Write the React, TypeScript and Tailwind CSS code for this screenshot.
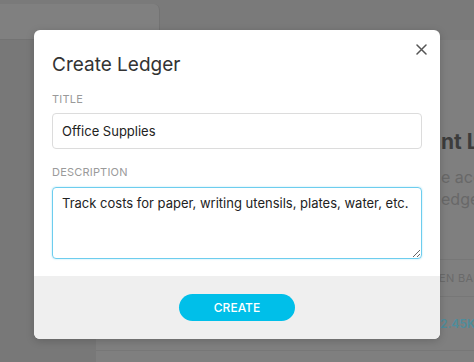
import React from "react";

export default function App() {
  return (
    <div className="relative w-[474px] h-[362px] overflow-hidden bg-[#7f7f7f] font-['Inter',sans-serif]">
      {/* dimmed page behind */}
      <div className="flex flex-col h-full">
        <header className="h-[40px] shrink-0 bg-[#7a7a7a] pt-[4px]">
          <div className="w-[160px] h-[36px] bg-[#808080] border-r border-b border-[#737373] rounded-tr-[6px]" />
        </header>
        <div className="flex flex-1">
          <aside className="w-[96px] shrink-0 bg-[#787878]" />
          <main className="flex-1 flex flex-col min-w-0">
            <div className="pl-[345px] pt-[88px] whitespace-nowrap">
              <div className="text-[21px] leading-[28px] font-bold text-[#3c3c3c]">nt Ledgers</div>
              <div className="mt-[10px] text-[16px] leading-[22px] text-[#686868]">
                <div>e accounts for</div>
                <div>edgers</div>
              </div>
            </div>
            <div className="mt-[49px] border-t border-[#777777]">
              <div className="h-[37px] border-b border-[#777777] flex items-center pl-[343px] whitespace-nowrap text-[11px] tracking-[0.3px] text-[#6a6a6a]">
                EN BALANCE
              </div>
              <div className="h-[54px] border-b border-[#777777] flex items-center pl-[344px] whitespace-nowrap text-[12px] font-semibold text-[#4e8d9c]">
                2.45K
              </div>
            </div>
          </main>
        </div>
      </div>

      {/* modal */}
      <div className="absolute left-[34px] top-[30px] w-[406px] h-[309px] rounded-[6px] bg-white overflow-hidden shadow-[0_2px_8px_rgba(0,0,0,0.18)] flex flex-col">
        <div className="relative flex-1 px-[18px] pt-[21px]">
          <button className="absolute right-[13px] top-[14px] w-[11px] h-[11px] flex items-center justify-center text-[#555]">
            <svg width="11" height="11" viewBox="0 0 11 11" fill="none" stroke="currentColor" strokeWidth="1.5" strokeLinecap="round">
              <path d="M1 1L10 10M10 1L1 10" />
            </svg>
          </button>
          <h2 className="text-[19px] leading-[28px] text-[#333333]">Create Ledger</h2>
          <label className="block mt-[12px] text-[11px] leading-[16px] tracking-[0.2px] text-[#9a9a9a]">TITLE</label>
          <input
            readOnly
            value="Office Supplies"
            className="block mt-[6px] w-full h-[36px] px-[9px] border border-[#dcdcdc] rounded-[4px] text-[13px] text-[#222] outline-none"
          />
          <label className="block mt-[15px] text-[11px] leading-[16px] tracking-[0.2px] text-[#9a9a9a]">DESCRIPTION</label>
          <textarea
            readOnly
            defaultValue="Track costs for paper, writing utensils, plates, water, etc."
            className="block mt-[7px] w-full h-[72px] px-[9px] py-[5px] border border-[#6dcdee] rounded-[4px] text-[13px] leading-[20px] text-[#222] outline-none shadow-[0_0_2px_#a8e2f5]"
          />
        </div>
        <div className="h-[63px] shrink-0 bg-[#efefef] flex items-center justify-center">
          <button className="w-[116px] h-[27px] rounded-full bg-[#00bfe9] text-white text-[12px] font-medium">
            CREATE
          </button>
        </div>
      </div>
    </div>
  );
}
